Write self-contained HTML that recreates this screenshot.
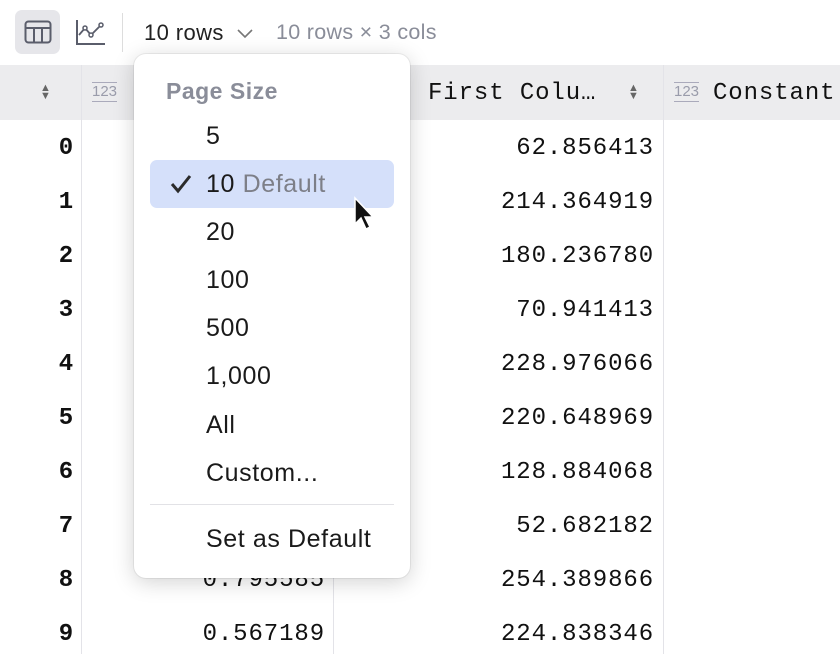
<!DOCTYPE html>
<html><head><meta charset="utf-8"><style>
*{margin:0;padding:0;box-sizing:border-box}
body{width:840px;height:654px;overflow:hidden;background:#fff;position:relative;font-family:"Liberation Sans",sans-serif}
.abs{position:absolute}
.mono{font-family:"Liberation Mono",monospace;font-size:24px;letter-spacing:0.9px;color:#111}
.hdr{top:65px;left:0;width:840px;height:55px;background:#ececee}
.vl{top:65px;width:1px;height:589px;background:#e3e3e8}
.idx{left:0;width:74px;text-align:right;font-weight:bold}
.c2{left:82px;width:243px;text-align:right}
.c3{left:334px;width:320px;text-align:right}
.menu{left:134px;top:54px;width:276px;height:524px;background:#fff;border-radius:12px;box-shadow:0 4px 22px rgba(0,0,0,.18),0 0 0 1px rgba(0,0,0,.06)}
.mi{position:absolute;left:72px;font-size:25px;letter-spacing:0.6px;color:#1a1a1a}
</style></head><body>
<div class="abs" style="left:15px;top:10px;width:45px;height:44px;background:#e6e6ea;border-radius:7px"></div>
<svg class="abs" style="left:24px;top:20px" width="28" height="24" viewBox="0 0 28 24"><rect x="1.5" y="1.5" width="25" height="21" rx="3" fill="none" stroke="#5a5d6b" stroke-width="2"/><path d="M1.5 8h25M10 8v14M18 8v14" stroke="#5a5d6b" stroke-width="2"/></svg>
<svg class="abs" style="left:75px;top:18px" width="32" height="28" viewBox="0 0 32 28"><path d="M2 2v24h28" fill="none" stroke="#5a5d6b" stroke-width="2"/><path d="M4 17l6-7 6 7 9-9" fill="none" stroke="#5a5d6b" stroke-width="1.8"/><circle cx="10" cy="10" r="2" fill="#fff" stroke="#5a5d6b" stroke-width="1.5"/><circle cx="16" cy="17" r="2" fill="#fff" stroke="#5a5d6b" stroke-width="1.5"/><circle cx="26" cy="7" r="2" fill="#fff" stroke="#5a5d6b" stroke-width="1.5"/></svg>
<div class="abs" style="left:122px;top:13px;width:1px;height:39px;background:#ddd"></div>
<div class="abs" style="left:144px;top:20px;font-size:22px;letter-spacing:0.4px;color:#222">10 rows</div>
<svg class="abs" style="left:236px;top:28px" width="18" height="11"><path d="M2 2l7 7 7-7" fill="none" stroke="#777" stroke-width="1.6"/></svg>
<div class="abs" style="left:276px;top:20px;font-size:21.5px;letter-spacing:0.3px;color:#8a8d99">10 rows × 3 cols</div>

<div class="abs hdr"></div>
<div class="abs vl" style="left:81px"></div>
<div class="abs vl" style="left:333px"></div>
<div class="abs vl" style="left:663px"></div>
<div class="abs" style="left:40px;top:84px;font-size:11px;color:#666;line-height:8px">▲<br>▼</div>
<div class="abs" style="left:92px;top:82px;font-size:15px;color:#9a9cab;border-top:1.5px solid #aab;border-bottom:1.5px solid #aab;line-height:18px">123</div>
<div class="abs mono" style="left:428px;top:80px">First Colu…</div>
<div class="abs" style="left:628px;top:84px;font-size:11px;color:#666;line-height:8px">▲<br>▼</div>
<div class="abs" style="left:674px;top:82px;font-size:15px;color:#9a9cab;border-top:1.5px solid #aab;border-bottom:1.5px solid #aab;line-height:18px">123</div>
<div class="abs mono" style="left:713px;top:80px">Constant</div>

<div class="abs mono idx" style="top:135px">0</div><div class="abs mono c3" style="top:135px">62.856413</div>
<div class="abs mono idx" style="top:189px">1</div><div class="abs mono c3" style="top:189px">214.364919</div>
<div class="abs mono idx" style="top:243px">2</div><div class="abs mono c3" style="top:243px">180.236780</div>
<div class="abs mono idx" style="top:297px">3</div><div class="abs mono c3" style="top:297px">70.941413</div>
<div class="abs mono idx" style="top:351px">4</div><div class="abs mono c3" style="top:351px">228.976066</div>
<div class="abs mono idx" style="top:405px">5</div><div class="abs mono c3" style="top:405px">220.648969</div>
<div class="abs mono idx" style="top:459px">6</div><div class="abs mono c3" style="top:459px">128.884068</div>
<div class="abs mono idx" style="top:513px">7</div><div class="abs mono c3" style="top:513px">52.682182</div>
<div class="abs mono idx" style="top:567px">8</div><div class="abs mono c2" style="top:567px">0.795585</div><div class="abs mono c3" style="top:567px">254.389866</div>
<div class="abs mono idx" style="top:621px">9</div><div class="abs mono c2" style="top:621px">0.567189</div><div class="abs mono c3" style="top:621px">224.838346</div>

<div class="abs menu">
<div style="position:absolute;left:32px;top:24px;font-size:23px;letter-spacing:0.5px;font-weight:bold;color:#8a8d99">Page Size</div>
<div class="mi" style="top:68px">5</div>
<div style="position:absolute;left:16px;top:106px;width:244px;height:48px;background:#d5e0fa;border-radius:7px"></div>
<svg style="position:absolute;left:36px;top:120px" width="22" height="20"><path d="M2 10l6 7L20 2" fill="none" stroke="#2b2b2b" stroke-width="3"/></svg>
<div class="mi" style="top:116px">10 <span style="color:#7d7f88">Default</span></div>
<div class="mi" style="top:164px">20</div>
<div class="mi" style="top:212px">100</div>
<div class="mi" style="top:260px">500</div>
<div class="mi" style="top:308px">1,000</div>
<div class="mi" style="top:357px">All</div>
<div class="mi" style="top:405px">Custom...</div>
<div style="position:absolute;left:16px;top:450px;width:244px;height:1px;background:#e2e2e6"></div>
<div class="mi" style="top:471px">Set as Default</div>
</div>
<svg class="abs" style="left:352px;top:196px" width="24" height="36" viewBox="0 0 24 36"><path d="M3 2v26l6-6 5 11 4-2-5-10h8z" fill="#111" stroke="#fff" stroke-width="1.5"/></svg>
</body></html>
